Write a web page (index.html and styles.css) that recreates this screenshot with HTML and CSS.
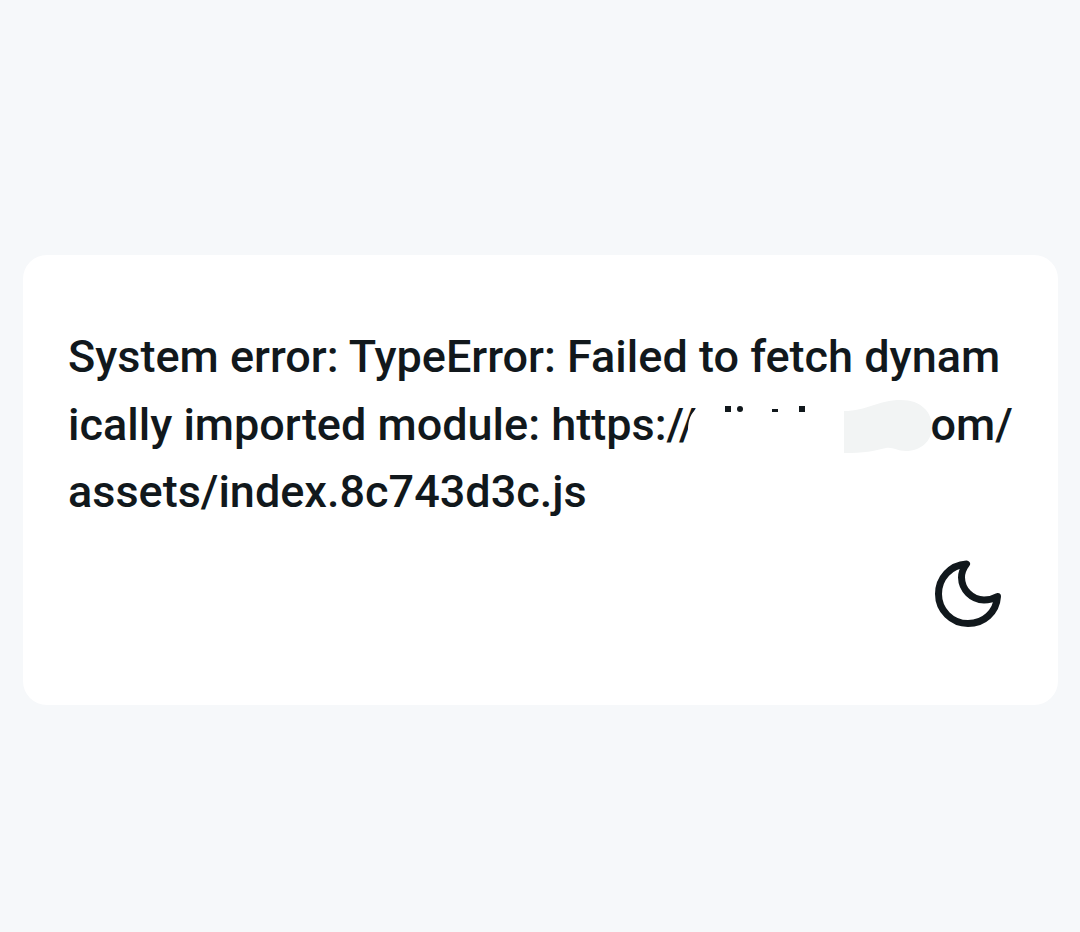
FILE: index.html
```html
<!DOCTYPE html>
<html lang="en">
<head>
<meta charset="utf-8">
<meta name="viewport" content="width=device-width, initial-scale=1">
<title>System error</title>
<link rel="stylesheet" href="styles.css">
</head>
<body>
<main class="page">
  <section class="card">
    <p class="message" role="alert">System error: TypeError: Failed to fetch dynam<br>ically imported module: https://<svg class="redaction" width="244" height="60" viewBox="0 0 244 60" aria-hidden="true">
        <path fill="#fff" d="M-2 60V38C-2 29 1 22 7 17V10H244V60Z"/>
        <path fill="#11181c" d="M35 15h6v6h-6zM82 18h6v3h-6zM109 15h6v6h-6z"/>
        <circle cx="50" cy="18" r="3" fill="#11181c"/>
        <path fill="#f2f4f4" d="M154 20C177 20 188 9 211 9C231 9 242 21 242 36C242 50 231 60 216 60C207 60 203 56 196 57C184 60 174 62 154 62Z"/>
      </svg>om/<br>assets/index.8c743d3c.js</p>
    <button class="theme-toggle" type="button" aria-label="Switch to dark theme">
      <svg class="moon" viewBox="0 0 72 72" aria-hidden="true">
        <path d="M34.500 6C18.500 7 6.500 20 6.500 36A29.500 29.500 0 0 0 36 65.500C52 65.500 64.500 54 65.500 38.500C61 41 57 42 52 42A23 23 0 0 1 29.500 19.500C29.500 14.500 31.500 10 34.500 6Z"/>
      </svg>
    </button>
  </section>
</main>
</body>
</html>
```
FILE: styles.css
```css
* {
  box-sizing: border-box;
}

body {
  margin: 0;
  background: #f6f8fa;
  color: #11181c;
  font-family: Roboto, "Liberation Sans", sans-serif;
}

.page {
  min-height: 100vh;
  padding: 255px 22px 24px 23px;
}

.card {
  display: flex;
  flex-direction: column;
  padding: 68px 45px 75px;
  border-radius: 24px;
  background: #fff;
}

.message {
  margin: 0;
  font-size: 45px;
  font-weight: 500;
  line-height: 1.5;
  white-space: nowrap;
}

.redaction {
  height: 60px;
  margin: 0 -3px 0 -7px;
  overflow: visible;
  vertical-align: top;
}

.theme-toggle {
  align-self: flex-end;
  display: flex;
  margin: 32px 9px 0 0;
  padding: 0;
  border: 0;
  background: none;
  color: inherit;
  cursor: pointer;
}

.moon {
  width: 72px;
  height: 72px;
  fill: none;
  stroke: currentColor;
  stroke-width: 7;
  stroke-linecap: round;
  stroke-linejoin: round;
}
```
